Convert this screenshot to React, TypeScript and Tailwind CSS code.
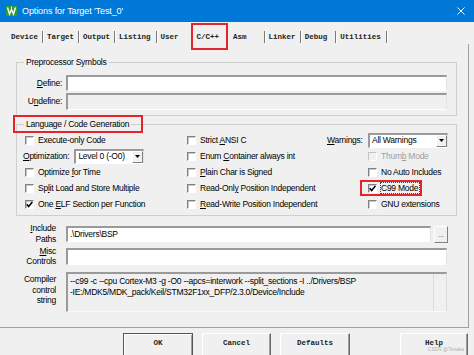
import React from "react";

function Check({ checked = false, disabled = false }: { checked?: boolean; disabled?: boolean }) {
  return (
    <span
      className={
        disabled
          ? "relative block w-[9px] h-[9px] shrink-0 border border-t-[#c4c4c4] border-l-[#c4c4c4] border-r-white border-b-white bg-[#f0f0f0]"
          : "relative block w-[9px] h-[9px] shrink-0 border border-t-[#808080] border-l-[#808080] border-r-white border-b-white bg-white shadow-[inset_1px_1px_0_#c8c8c8]"
      }
    >
      {checked && (
        <svg className="absolute left-0 top-0" width="7" height="7" viewBox="0 0 7 7">
          <path d="M0.8 3.2 L2.6 5.4 L6.4 0.9" stroke="#000" strokeWidth="1.6" fill="none" />
        </svg>
      )}
    </span>
  );
}

function Arrow() {
  return (
    <span className="flex items-center justify-center w-[11px] h-full bg-[#f0f0f0] border border-t-white border-l-white border-r-[#808080] border-b-[#808080]">
      <svg width="5" height="3" viewBox="0 0 5 3">
        <path d="M0 0 H5 L2.5 3 Z" fill="#000" />
      </svg>
    </span>
  );
}

function Sep() {
  return <span className="block w-px h-[12px] bg-[#7a7a7a] shadow-[1px_0_0_#fff]" />;
}

export default function App() {
  return (
    <div className="relative w-[474px] h-[355px] overflow-hidden bg-[#f0f0f0] flex flex-col whitespace-nowrap text-black text-[8.5px] tracking-[-0.25px] leading-none [font-family:'Liberation_Sans',Arial,sans-serif]">
      {/* Title bar */}
      <div className="h-[22px] shrink-0 bg-[#0078d7] flex items-center pl-[6px]">
        <svg width="11" height="10" viewBox="0 0 11 10">
          <rect x="0" y="0" width="11" height="10" fill="#2f9a3a" />
          <path d="M1.5 1.5 L3.5 8 L5.5 3.5 L7.5 8 L9.5 1.5" stroke="#fff" strokeWidth="1.4" fill="none" />
          <rect x="5" y="0.5" width="1" height="2" fill="#fff" />
        </svg>
        <span className="ml-[5px] text-white text-[9px] tracking-[-0.1px]">Options for Target 'Test_0'</span>
        <svg className="ml-auto mr-[9px]" width="8" height="8" viewBox="0 0 8 8">
          <path d="M0.5 0.5 L7.5 7.5 M7.5 0.5 L0.5 7.5" stroke="#fff" strokeWidth="1" />
        </svg>
      </div>

      {/* Tabs */}
      <div className="h-[22px] shrink-0 pt-[8px] flex items-center text-[#222] text-[7.5px] tracking-normal leading-[9px] font-bold [font-family:'Liberation_Mono','Courier_New',monospace]">
        <span className="ml-[11px]">Device</span>
        <span className="ml-[4px]"><Sep /></span>
        <span className="ml-[4px]">Target</span>
        <span className="ml-[4px]"><Sep /></span>
        <span className="ml-[4px]">Output</span>
        <span className="ml-[4px]"><Sep /></span>
        <span className="ml-[4px]">Listing</span>
        <span className="ml-[5px]"><Sep /></span>
        <span className="ml-[4px]">User</span>
        <span className="relative ml-[18px]">
          C/C++
          <span className="absolute -left-[6px] -right-[9px] -top-[10px] -bottom-[8px] border-2 border-[#e3262b]" />
        </span>
        <span className="ml-[14px]">Asm</span>
        <span className="ml-[17px]"><Sep /></span>
        <span className="ml-[4px]">Linker</span>
        <span className="ml-[4px]"><Sep /></span>
        <span className="ml-[4px]">Debug</span>
        <span className="ml-[8px]"><Sep /></span>
        <span className="ml-[4px]">Utilities</span>
        <span className="ml-[5px]"><Sep /></span>
      </div>

      {/* Panel */}
      <div className="w-[469px] h-[284px] shrink-0 border-r border-b border-[#a0a0a0] flex flex-col">
        {/* Preprocessor Symbols */}
        <fieldset className="ml-[16px] mt-[13px] w-[441px] border border-[#cfcfcf] pb-[5px]">
          <legend className="ml-[7px] px-[2px] leading-[11px]">Preprocessor Symbols</legend>
          <div className="mt-[7px] flex items-center gap-[4px]">
            <span className="w-[45px] text-right">
              <u>D</u>efine:
            </span>
            <div className="w-[381px] h-[16px] bg-white border-t-2 border-l-2 border-r border-b border-t-[#9a9a9a] border-l-[#9a9a9a] border-r-[#e3e3e3] border-b-white" />
          </div>
          <div className="mt-[2px] flex items-center gap-[4px]">
            <span className="w-[45px] text-right">
              U<u>n</u>define:
            </span>
            <div className="w-[381px] h-[17px] bg-[#f0f0f0] border-t-2 border-l-2 border-r border-b border-t-[#9a9a9a] border-l-[#9a9a9a] border-r-[#e3e3e3] border-b-white" />
          </div>
        </fieldset>

        {/* Language / Code Generation */}
        <fieldset className="ml-[16px] mt-[3px] w-[441px] border border-[#cfcfcf] pt-[2px] pb-[3px]">
          <legend className="relative ml-[7px] px-[2px] leading-[11px]">
            Language / Code Generation
            <span className="absolute -left-[11px] -right-[12px] -top-[4px] -bottom-[3px] border-2 border-[#e3262b]" />
          </legend>
          <div className="grid grid-cols-[162px_139px_122px] pl-[8px]">
            {/* Row 1 */}
            <div className="flex items-center h-[16px] gap-[4px]">
              <Check />
              <span>Execute-only Code</span>
            </div>
            <div className="flex items-center h-[16px] gap-[4px]">
              <Check />
              <span>
                Strict <u>A</u>NSI C
              </span>
            </div>
            <div className="flex items-center h-[16px] pl-[1px]">
              <span>
                <u>W</u>arnings:
              </span>
              <div className="ml-auto w-[80px] h-[15px] flex items-stretch bg-white border-t-2 border-l-2 border-r border-b border-t-[#9a9a9a] border-l-[#9a9a9a] border-r-[#e3e3e3] border-b-white">
                <span className="flex-1 flex items-center pl-[2px]">All Warnings</span>
                <Arrow />
              </div>
            </div>

            {/* Row 2 */}
            <div className="flex items-center h-[16px] -ml-[2px]">
              <span>
                <u>O</u>ptimization:
              </span>
              <div className="ml-[5px] w-[70px] h-[15px] flex items-stretch bg-white border-t-2 border-l-2 border-r border-b border-t-[#9a9a9a] border-l-[#9a9a9a] border-r-[#e3e3e3] border-b-white">
                <span className="flex-1 flex items-center pl-[2px]">Level 0 (-O0)</span>
                <Arrow />
              </div>
            </div>
            <div className="flex items-center h-[16px] gap-[4px]">
              <Check />
              <span>
                Enum <u>C</u>ontainer always int
              </span>
            </div>
            <div className="flex items-center h-[16px] gap-[4px] pl-[42px] text-[#a0a0a0]">
              <Check disabled />
              <span>
                Thum<u>b</u> Mode
              </span>
            </div>

            {/* Row 3 */}
            <div className="flex items-center h-[16px] gap-[4px]">
              <Check />
              <span>
                Optimize <u>f</u>or Time
              </span>
            </div>
            <div className="flex items-center h-[16px] gap-[4px]">
              <Check />
              <span>
                <u>P</u>lain Char is Signed
              </span>
            </div>
            <div className="flex items-center h-[16px] gap-[4px] pl-[42px]">
              <Check />
              <span>No Auto Includes</span>
            </div>

            {/* Row 4 */}
            <div className="flex items-center h-[16px] gap-[4px]">
              <Check />
              <span>
                Sp<u>l</u>it Load and Store Multiple
              </span>
            </div>
            <div className="flex items-center h-[16px] gap-[4px]">
              <Check />
              <span>
                Read-Onl<u>y</u> Position Independent
              </span>
            </div>
            <div className="relative flex items-center h-[16px] gap-[3px] pl-[42px]">
              <Check checked />
              <span className="border border-dotted border-[#444] leading-[10px] pr-[1px]">C99 Mode</span>
              <span className="absolute left-[34px] right-[26px] top-0 bottom-0 border-2 border-[#e3262b]" />
            </div>

            {/* Row 5 */}
            <div className="flex items-center h-[16px] gap-[4px]">
              <Check checked />
              <span>
                One <u>E</u>LF Section per Function
              </span>
            </div>
            <div className="flex items-center h-[16px] gap-[4px]">
              <Check />
              <span>
                <u>R</u>ead-Write Position Independent
              </span>
            </div>
            <div className="flex items-center h-[16px] gap-[4px] pl-[42px]">
              <Check />
              <span>GNU extensions</span>
            </div>
          </div>
        </fieldset>

        {/* Include Paths */}
        <div className="mt-[7px] h-[22px] flex items-center">
          <div className="w-[56px] text-right leading-[11px]">
            <div>
              <u>I</u>nclude
            </div>
            <div>Paths</div>
          </div>
          <div className="ml-[10px] w-[365px] h-[16px] flex items-center pl-[2px] bg-white border-t-2 border-l-2 border-r border-b border-t-[#9a9a9a] border-l-[#9a9a9a] border-r-[#e3e3e3] border-b-white">
            .\Drivers\BSP
          </div>
          <div className="ml-[3px] w-[14px] h-[17px] flex items-center justify-center text-[7px] text-[#555] bg-[#f0f0f0] border border-t-white border-l-white border-r-[#808080] border-b-[#808080]">
            ...
          </div>
        </div>

        {/* Misc Controls */}
        <div className="h-[22px] flex items-center">
          <div className="w-[56px] text-right leading-[10px]">
            <div>
              <u>M</u>isc
            </div>
            <div>Controls</div>
          </div>
          <div className="ml-[10px] w-[381px] h-[17px] bg-white border-t-2 border-l-2 border-r border-b border-t-[#9a9a9a] border-l-[#9a9a9a] border-r-[#e3e3e3] border-b-white" />
        </div>

        {/* Compiler control string */}
        <div className="flex items-start">
          <div className="mt-[7px] w-[56px] text-right leading-[10.5px]">
            <div>Compiler</div>
            <div>control</div>
            <div>string</div>
          </div>
          <div className="mt-[5px] ml-[10px] w-[381px] h-[40px] flex bg-[#f0f0f0] border-t-2 border-l-2 border-r border-b border-t-[#9a9a9a] border-l-[#9a9a9a] border-r-[#dcdcdc] border-b-[#fafafa]">
            <div className="flex-1 pl-[2px] pt-[2px] leading-[10.5px] overflow-hidden">
              <div>--c99 -c --cpu Cortex-M3 -g -O0 --apcs=interwork --split_sections -I ../Drivers/BSP</div>
              <div>-IE:/MDK5/MDK_pack/Keil/STM32F1xx_DFP/2.3.0/Device/Include</div>
            </div>
            <div className="w-[13px] border-l border-[#dcdcdc]" />
          </div>
        </div>
      </div>

      {/* Buttons */}
      <div className="mt-[5px] flex text-[7.5px] tracking-normal font-bold text-[#222] [font-family:'Liberation_Mono','Courier_New',monospace]">
        <div className="ml-[123px] w-[70px] h-[24px] flex justify-center pt-[6px] bg-[#f0f0f0] border border-[#555] shadow-[inset_1px_1px_0_#fff,inset_-1px_-1px_0_#a0a0a0]">
          OK
        </div>
        <div className="ml-[9px] w-[69px] h-[24px] flex justify-center pt-[6px] bg-[#f0f0f0] border border-t-white border-l-white border-r-[#696969] border-b-[#696969] shadow-[inset_-1px_-1px_0_#a0a0a0]">
          Cancel
        </div>
        <div className="ml-[9px] w-[70px] h-[24px] flex justify-center pt-[6px] bg-[#f0f0f0] border border-t-white border-l-white border-r-[#696969] border-b-[#696969] shadow-[inset_-1px_-1px_0_#a0a0a0]">
          Defaults
        </div>
        <div className="ml-[50px] w-[68px] h-[24px] flex justify-center pt-[6px] bg-[#f0f0f0] border border-t-white border-l-white border-r-[#696969] border-b-[#696969] shadow-[inset_-1px_-1px_0_#a0a0a0]">
          Help
        </div>
      </div>

      <span className="absolute right-[10px] bottom-[3px] text-[5px] tracking-normal leading-none text-[#b0b0b0] [font-family:'Liberation_Sans',sans-serif]">
        CSDN @Tesaka
      </span>
    </div>
  );
}
